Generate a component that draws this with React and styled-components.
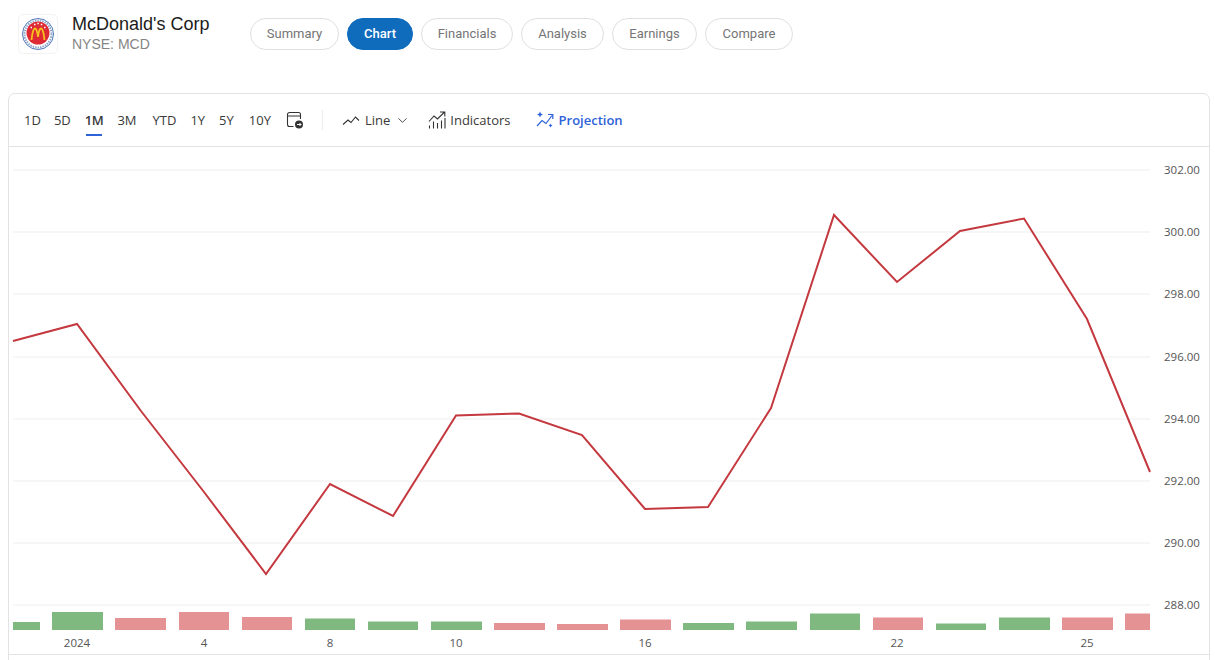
import React from 'react';
import styled, { createGlobalStyle } from 'styled-components';
import { ChevronDown } from 'lucide-react';

const GlobalStyle = createGlobalStyle`
  html, body {
    margin: 0;
    padding: 0;
    height: 660px;
    overflow: hidden;
    background: #fff;
    font-family: "Open Sans", "Liberation Sans", sans-serif;
  }
`;

const Page = styled.div`
  width: 1215px;
  height: 660px;
  overflow: hidden;
`;

const Header = styled.header`
  display: flex;
  align-items: center;
  height: 66px;
  padding: 1px 0 0 18px;
  box-sizing: border-box;
  margin-bottom: 27px;
`;

const LogoBox = styled.div`
  width: 40px;
  height: 40px;
  display: flex;
  align-items: center;
  justify-content: center;
  border: 1px solid #f2f2f2;
  border-radius: 5px;
  box-sizing: border-box;
  margin-right: 14px;
`;

const Company = styled.div`
  width: 178px;
`;

const CompanyName = styled.div`
  font-family: "Liberation Sans", Arial, sans-serif;
  font-size: 18px;
  line-height: 21px;
  color: #1b1b1b;
`;

const Ticker = styled.div`
  font-family: "Liberation Sans", Arial, sans-serif;
  font-size: 14px;
  line-height: 18px;
  color: #858585;
`;

const Tabs = styled.nav`
  display: flex;
  gap: 8px;
`;

const Tab = styled.div`
  width: ${p => p.$width}px;
  height: 32px;
  display: flex;
  align-items: center;
  justify-content: center;
  border-radius: 16px;
  box-sizing: border-box;
  font-family: "Roboto", "Liberation Sans", sans-serif;
  font-size: 13px;
  font-weight: ${p => (p.$active ? 500 : 400)};
  color: ${p => (p.$active ? '#fff' : '#757575')};
  background: ${p => (p.$active ? '#0f6cbd' : '#fff')};
  border: 1px solid ${p => (p.$active ? '#0f6cbd' : '#e0e0e0')};
`;

const Card = styled.section`
  margin-left: 8px;
  width: 1202px;
  height: 640px;
  box-sizing: border-box;
  border: 1px solid #e3e3e3;
  border-radius: 7px;
  background: #fff;
`;

const Toolbar = styled.div`
  display: flex;
  align-items: center;
  height: 52px;
  padding-left: 15px;
  border-bottom: 1px solid #e3e3e3;
  box-sizing: content-box;
`;

const Range = styled.div`
  position: relative;
  height: 52px;
  display: flex;
  align-items: center;
  margin-right: ${p => p.$gap}px;
  font-size: 13px;
  color: #3a3a3a;
  font-weight: ${p => (p.$active ? 600 : 400)};
  letter-spacing: ${p => (p.$active ? '-0.4px' : '0')};

  ${p => p.$active && `
    &::after {
      content: '';
      position: absolute;
      left: 1px;
      right: 1px;
      bottom: 10px;
      height: 2px;
      background: #2d62d8;
    }
  `}
`;

const Divider = styled.div`
  width: 1px;
  height: 20px;
  background: #ececec;
  margin: 0 19px 0 18px;
`;

const ToolButton = styled.div`
  display: flex;
  align-items: center;
  gap: ${p => p.$gap || 4}px;
  margin-right: ${p => p.$after || 0}px;
  font-size: 13px;
  color: ${p => (p.$accent ? '#2d62d8' : '#3a3a3a')};
  font-weight: ${p => (p.$accent ? 600 : 400)};
`;

const ChartBox = styled.div`
  height: 507px;
  border-bottom: 1px solid #e3e3e3;
`;

const ChartSvg = styled.svg`
  display: block;
`;

const AxisLabel = styled.text`
  font-family: "Open Sans", "Liberation Sans", sans-serif;
  font-size: 11.5px;
  fill: #555;
`;

const GREEN = '#80b97f';
const RED = '#e59295';

const gridLines = [
  [170, '302.00'], [232, '300.00'], [294, '298.00'], [357, '296.00'],
  [419, '294.00'], [481, '292.00'], [543, '290.00'], [605, '288.00'],
];

const priceLine = [
  [13, 341], [77, 324], [141, 411], [204, 492], [266, 574], [330, 484], [393, 516],
  [456, 415.5], [519, 413.5], [582, 435], [645, 509], [708, 507], [771, 408], [834, 215],
  [897, 282], [960, 231], [1024, 218.5], [1087, 319], [1150, 472],
];

const volume = [
  [13, 40, 622, GREEN], [52, 103, 612, GREEN], [115, 166, 618, RED], [179, 229, 612, RED],
  [242, 292, 617, RED], [305, 355, 618.5, GREEN], [368, 418, 621.5, GREEN], [431, 482, 621.5, GREEN],
  [494, 545, 623, RED], [557, 608, 624, RED], [620, 671, 619.5, RED], [683, 734, 623, GREEN],
  [746, 797, 621.5, GREEN], [810, 860, 613.5, GREEN], [873, 923, 617.5, RED], [936, 986, 623.5, GREEN],
  [999, 1050, 617.5, GREEN], [1062, 1113, 617.5, RED], [1125, 1150, 613.5, RED],
];

const xLabels = [[77, '2024'], [204, '4'], [330, '8'], [456, '10'], [645, '16'], [897, '22'], [1087, '25']];

const ranges = [
  ['1D', 13], ['5D', 14], ['1M', 14, true], ['3M', 16], ['YTD', 14], ['1Y', 14], ['5Y', 15], ['10Y', 15],
];

const tabs = [
  ['Summary', 89], ['Chart', 66, true], ['Financials', 92], ['Analysis', 83], ['Earnings', 85], ['Compare', 88],
];

function Logo() {
  return (
    <svg width="34" height="34" viewBox="0 0 34 34">
      <circle cx="17" cy="17" r="15.500" fill="#fff" stroke="#4f78b8" strokeWidth="1" />
      <circle cx="17" cy="17" r="13.500" fill="none" stroke="#8fa5c9" strokeWidth="2" strokeDasharray="1.500 1" />
      <circle cx="17" cy="16" r="11.500" fill="#dd2a35" />
      <path d="M10.500 23 C11.500 14 12.500 11.500 14 11.500 C15.800 11.500 16.500 16 17 20 C17.500 16 18.200 11.500 20 11.500 C21.500 11.500 22.500 14 23.500 23" fill="none" stroke="#f6c21b" strokeWidth="1.800" />
      <path d="M9.500 10.500h1.500M13 7.500h1.500M16.300 6.500h1.500M19.800 7.500h1.500M23 10.500h1.500" stroke="#fff" strokeWidth="1.400" />
    </svg>
  );
}

function CalendarIcon() {
  return (
    <svg width="18" height="18" viewBox="0 0 18 18" fill="none">
      <path d="M7.500 15.500H3.500a2 2 0 0 1-2-2V3.500a2 2 0 0 1 2-2h9a2 2 0 0 1 2 2V8M1.500 5h13" stroke="#333" strokeWidth="1.100" />
      <circle cx="13" cy="13.500" r="4" fill="#333" />
      <path d="M11 13.500h4M13.500 12l1.500 1.500-1.500 1.500" stroke="#fff" strokeWidth="1" />
    </svg>
  );
}

function LineIcon() {
  return (
    <svg width="18" height="12" viewBox="0 0 18 12" fill="none">
      <path d="M1 10.500l5-4.500 3 2.500L13.500 3l3.500 3.500" stroke="#333" strokeWidth="1.100" />
    </svg>
  );
}

function IndicatorsIcon() {
  return (
    <svg width="18" height="18" viewBox="0 0 18 18" fill="none">
      <path d="M1 10.500l5-5.500 3.500 3L16.500 1M12 1h4.800v4.500" stroke="#333" strokeWidth="1.100" />
      <path d="M1.500 17.500v-3M5.500 17.500v-7M9.500 17.500v-5.500M13.500 17.500v-8M17 17.500V7" stroke="#333" strokeWidth="1.100" />
    </svg>
  );
}

function ProjectionIcon() {
  return (
    <svg width="18" height="18" viewBox="0 0 18 18" fill="none">
      <path d="M1 15l5-5.500 4 3L16 4.500M12 3.500h4.800V8" stroke="#2d62d8" strokeWidth="1.200" />
      <path d="M4 0.500l.9 2.100L7 3.500l-2.100.9L4 6.500l-.9-2.100L1 3.500l2.100-.9zM14.500 12.500l.7 1.300 1.300.7-1.300.7-.7 1.300-.7-1.300-1.300-.7 1.300-.7z" fill="#2d62d8" />
    </svg>
  );
}

function App() {
  return (
    <Page>
      <GlobalStyle />
      <Header>
        <LogoBox><Logo /></LogoBox>
        <Company>
          <CompanyName>McDonald's Corp</CompanyName>
          <Ticker>NYSE: MCD</Ticker>
        </Company>
        <Tabs>
          {tabs.map(([label, width, active]) => (
            <Tab key={label} $width={width} $active={active}>{label}</Tab>
          ))}
        </Tabs>
      </Header>
      <Card>
        <Toolbar>
          {ranges.map(([label, gap, active]) => (
            <Range key={label} $gap={gap} $active={active}>{label}</Range>
          ))}
          <CalendarIcon />
          <Divider />
          <ToolButton $after={18} $gap={5}>
            <LineIcon />
            <span>Line</span>
            <ChevronDown size={15} strokeWidth={1.4} color="#333" />
          </ToolButton>
          <ToolButton $gap={4} $after={25}>
            <IndicatorsIcon />
            <span>Indicators</span>
          </ToolButton>
          <ToolButton $accent $gap={5}>
            <ProjectionIcon />
            <span>Projection</span>
          </ToolButton>
        </Toolbar>
        <ChartBox>
          <ChartSvg width="1200" height="507" viewBox="9 147 1200 507">
            {gridLines.map(([y, label]) => (
              <g key={label}>
                <line x1="13" x2="1150" y1={y} y2={y} stroke="#f3f3f3" strokeWidth="1.500" />
                <AxisLabel x="1164" y={y + 4}>{label}</AxisLabel>
              </g>
            ))}
            {volume.map(([x1, x2, top, color]) => (
              <rect key={x1} x={x1} y={top} width={x2 - x1} height={630 - top} fill={color} />
            ))}
            <polyline
              points={priceLine.map(p => p.join(',')).join(' ')}
              fill="none"
              stroke="#c4393f"
              strokeWidth="2"
            />
            {xLabels.map(([x, label]) => (
              <AxisLabel key={label} x={x} y={647} textAnchor="middle">{label}</AxisLabel>
            ))}
          </ChartSvg>
        </ChartBox>
      </Card>
    </Page>
  );
}

export default App;
